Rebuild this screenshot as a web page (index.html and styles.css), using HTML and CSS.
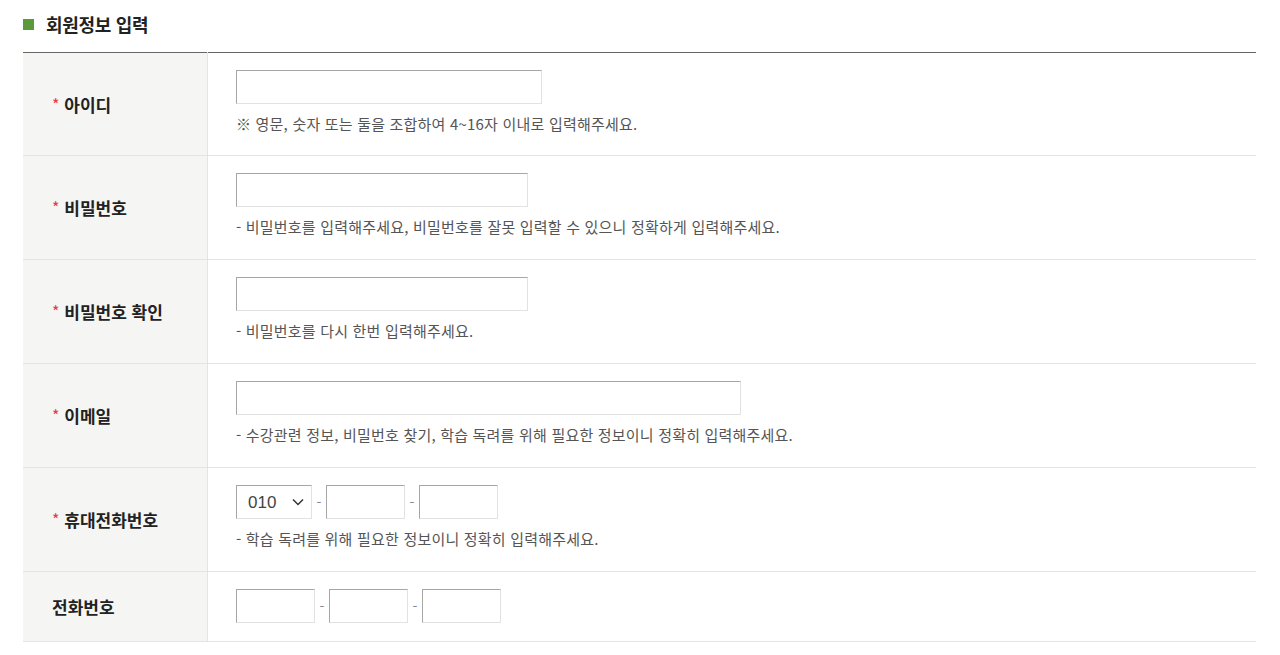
FILE: index.html
```html
<!DOCTYPE html>
<html lang="ko">
<head>
  <meta charset="UTF-8">
  <title>회원정보 입력</title>
  <link rel="stylesheet" href="styles.css">
</head>
<body>
  <h2 class="section-title">회원정보 입력</h2>
  <table class="form-table">
    <tr class="first">
      <th><span class="req">*</span> 아이디</th>
      <td>
        <input type="text" class="w-id">
        <p class="hint">※ 영문, 숫자 또는 둘을 조합하여 4~16자 이내로 입력해주세요.</p>
      </td>
    </tr>
    <tr>
      <th><span class="req">*</span> 비밀번호</th>
      <td>
        <input type="password" class="w-pw">
        <p class="hint">- 비밀번호를 입력해주세요, 비밀번호를 잘못 입력할 수 있으니 정확하게 입력해주세요.</p>
      </td>
    </tr>
    <tr>
      <th><span class="req">*</span> 비밀번호 확인</th>
      <td>
        <input type="password" class="w-pw">
        <p class="hint">- 비밀번호를 다시 한번 입력해주세요.</p>
      </td>
    </tr>
    <tr>
      <th><span class="req">*</span> 이메일</th>
      <td>
        <input type="text" class="w-mail">
        <p class="hint">- 수강관련 정보, 비밀번호 찾기, 학습 독려를 위해 필요한 정보이니 정확히 입력해주세요.</p>
      </td>
    </tr>
    <tr>
      <th><span class="req">*</span> 휴대전화번호</th>
      <td>
        <div class="phone">
          <span class="select-wrap">
            <select class="w-sel">
              <option>010</option>
              <option>011</option>
              <option>016</option>
              <option>017</option>
            </select>
            <svg class="chevron" width="12" height="8" viewBox="0 0 12 8">
              <path d="M1 1.5l5 5 5-5" fill="none" stroke="#333" stroke-width="1.5"/>
            </svg>
          </span>
          <span class="dash">-</span>
          <input type="text" class="w-num">
          <span class="dash">-</span>
          <input type="text" class="w-num">
        </div>
        <p class="hint">- 학습 독려를 위해 필요한 정보이니 정확히 입력해주세요.</p>
      </td>
    </tr>
    <tr class="last">
      <th>전화번호</th>
      <td>
        <div class="phone">
          <input type="text" class="w-tel">
          <span class="dash">-</span>
          <input type="text" class="w-tel">
          <span class="dash">-</span>
          <input type="text" class="w-tel">
        </div>
      </td>
    </tr>
  </table>
</body>
</html>
```

FILE: styles.css
```css
body {
  margin: 0;
  padding: 0 24px 0 23px;
  font-family: "Noto Sans CJK KR", "Noto Sans", sans-serif;
  color: #222;
  background: #fff;
}
.section-title {
  display: flex;
  align-items: center;
  gap: 12px;
  margin: 0;
  height: 52px;
  padding-bottom: 4px;
  box-sizing: border-box;
  font-size: 18px;
  font-weight: bold;
  color: #222;
  letter-spacing: -0.3px;
}
.section-title::before {
  content: "";
  width: 11px;
  height: 11px;
  background: #5b9a3a;
}
.form-table {
  width: 100%;
  border-collapse: collapse;
  border-top: 1px solid #666;
}
.form-table tr {
  border-bottom: 1px solid #e4e4e4;
}
.form-table th {
  width: 155px;
  padding: 0 0 0 29px;
  background: #f5f5f3;
  border-right: 1px solid #e4e4e4;
  text-align: left;
  font-size: 17px;
  font-weight: bold;
  color: #222;
}
.req {
  color: #e8383d;
  font-size: 16px;
  font-weight: normal;
  position: relative;
  top: -1px;
}
.form-table td {
  padding: 17px 28px 20px;
  vertical-align: top;
}
.form-table .first td {
  padding-bottom: 19px;
}
.form-table .last td {
  padding-bottom: 18px;
}
input, select {
  box-sizing: border-box;
  height: 34px;
  margin: 0;
  border: 1px solid;
  border-color: #a6a6a6 #e2e2e2 #e2e2e2 #a6a6a6;
  border-radius: 0;
  font-family: inherit;
  font-size: 15px;
  background: #fff;
  vertical-align: top;
}
.w-id { width: 306px; }
.w-pw { width: 292px; }
.w-mail { width: 505px; }
.w-num { width: 79px; }
.w-tel { width: 79px; }
.select-wrap {
  position: relative;
  display: block;
}
.w-sel {
  display: block;
  width: 76px;
  padding-left: 11px;
  appearance: none;
  -webkit-appearance: none;
  color: #444;
  font-family: "Liberation Sans", sans-serif;
  font-size: 17px;
}
.chevron {
  position: absolute;
  left: 56px;
  top: 13px;
  pointer-events: none;
}
.hint {
  margin: 8px 0 0;
  font-size: 15px;
  line-height: 24px;
  color: #555;
  letter-spacing: 0.2px;
}
.phone {
  display: flex;
  align-items: center;
  gap: 3px;
}
.dash {
  color: #888;
  font-size: 14px;
  width: 8px;
  text-align: center;
}
```
